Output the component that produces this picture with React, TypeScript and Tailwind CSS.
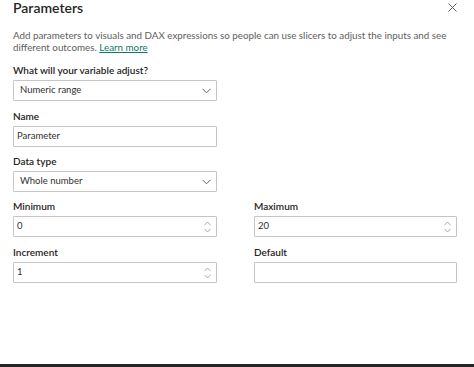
import React from "react";

const font = { fontFamily: "Lato, 'Noto Sans', sans-serif" };

function Chevron() {
  return (
    <svg width="9" height="6" viewBox="0 0 9 6" fill="none" className="text-[#605e5c]">
      <path d="M0.5 0.8 L4.5 4.8 L8.5 0.8" stroke="currentColor" strokeWidth="1" />
    </svg>
  );
}

function Spinner() {
  return (
    <div className="flex flex-col items-center gap-[2px] text-[#a19f9d]">
      <svg width="7" height="5" viewBox="0 0 7 5" fill="none">
        <path d="M0.5 4.2 L3.5 1 L6.5 4.2" stroke="currentColor" strokeWidth="0.9" />
      </svg>
      <svg width="7" height="5" viewBox="0 0 7 5" fill="none">
        <path d="M0.5 0.8 L3.5 4 L6.5 0.8" stroke="currentColor" strokeWidth="0.9" />
      </svg>
    </div>
  );
}

function Label({ children }: { children: React.ReactNode }) {
  return (
    <div className="text-[10px] leading-[13px] font-semibold text-[#252423] mb-[3px]">
      {children}
    </div>
  );
}

function Box({
  value,
  kind,
}: {
  value?: string;
  kind?: "select" | "number";
}) {
  return (
    <div className="h-[21px] border border-[#c8c6c4] rounded-[1px] flex items-center justify-between pl-[3px] pr-[5px] bg-white">
      <span className={`text-[9.5px] ${kind === "select" ? "pl-[3px]" : ""} text-[#323130]`}>
        {value}
      </span>
      {kind === "select" && <Chevron />}
      {kind === "number" && <Spinner />}
    </div>
  );
}

export default function App() {
  return (
    <div className="w-[474px] h-screen bg-white flex flex-col overflow-hidden" style={font}>
      <div className="flex-1 px-[13px] relative">
        <div className="text-[14px] leading-[16px] font-semibold text-[#252423]">
          Parameters
        </div>
        <svg
          className="absolute right-[17px] top-[3px] text-[#605e5c]"
          width="9"
          height="9"
          viewBox="0 0 9 9"
          fill="none"
        >
          <path d="M0.5 0.5 L8.5 8.5 M8.5 0.5 L0.5 8.5" stroke="currentColor" strokeWidth="1" />
        </svg>

        <p className="mt-[13px] w-[440px] text-[9.8px] leading-[12px] text-[#605e5c]">
          Add parameters to visuals and DAX expressions so people can use slicers to adjust the inputs and see
          different outcomes.{" "}
          <span className="text-[#117865] underline">Learn more</span>
        </p>

        <div className="mt-[11px] w-[204px]">
          <Label>What will your variable adjust?</Label>
          <Box value="Numeric range" kind="select" />
        </div>

        <div className="mt-[9px] w-[204px]">
          <Label>Name</Label>
          <Box value="Parameter" />
        </div>

        <div className="mt-[8px] w-[204px]">
          <Label>Data type</Label>
          <Box value="Whole number" kind="select" />
        </div>

        <div className="mt-[8px] grid grid-cols-[204px_203px] gap-x-[37px] gap-y-[9px]">
          <div>
            <Label>Minimum</Label>
            <Box value="0" kind="number" />
          </div>
          <div>
            <Label>Maximum</Label>
            <Box value="20" kind="number" />
          </div>
          <div>
            <Label>Increment</Label>
            <Box value="1" kind="number" />
          </div>
          <div>
            <Label>Default</Label>
            <Box />
          </div>
        </div>
      </div>
      <div className="h-[3px] bg-[#252525]" />
    </div>
  );
}
